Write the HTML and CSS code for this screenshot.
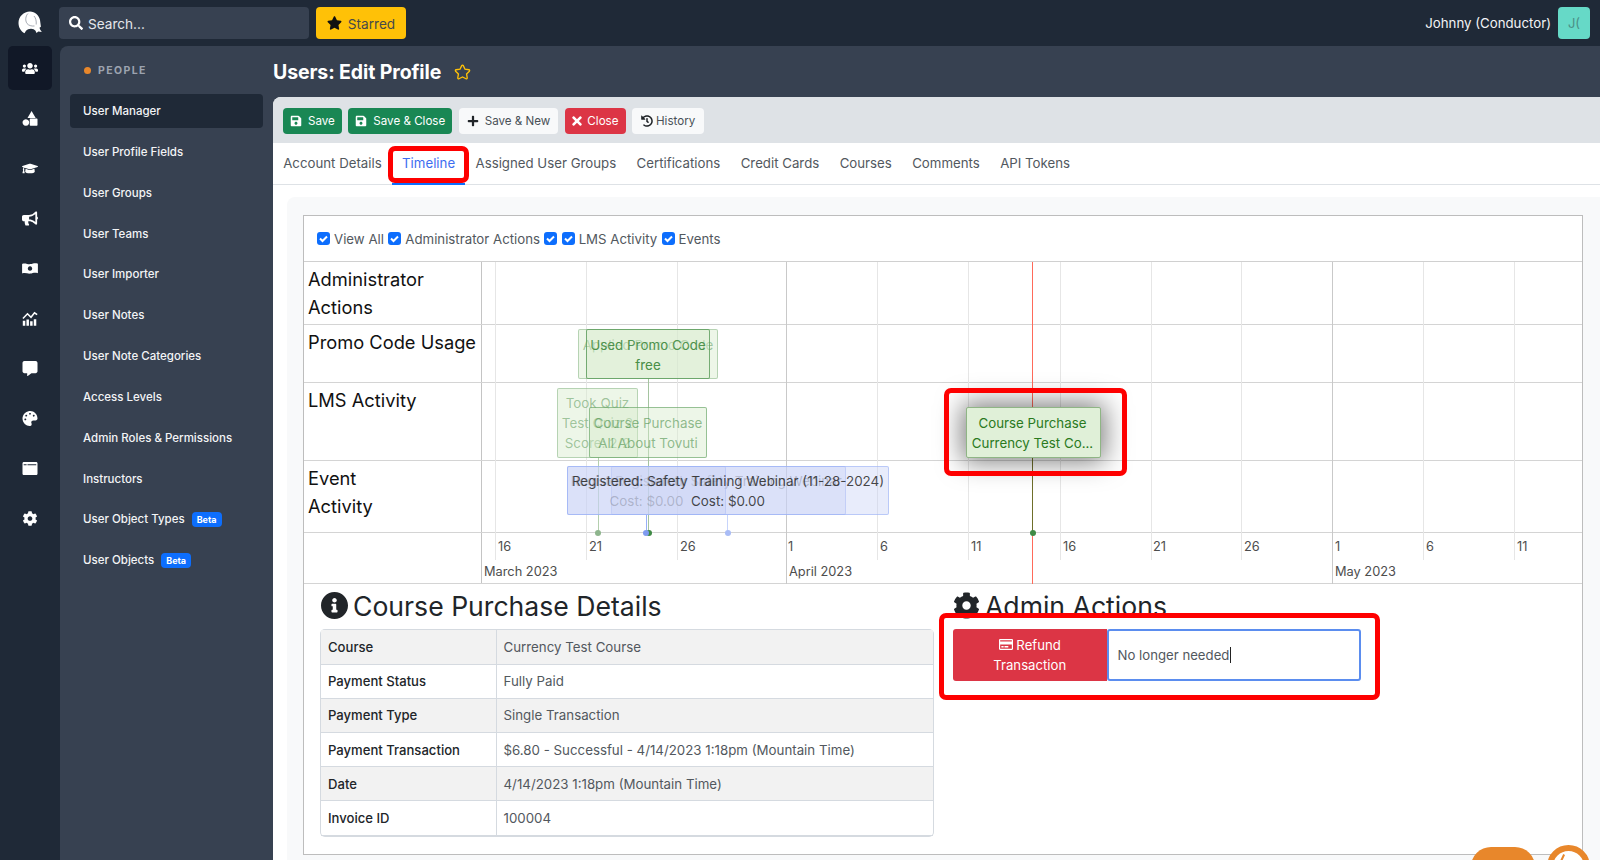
FILE: index.html
```html
<!DOCTYPE html>
<html lang="en">
<head>
<meta charset="utf-8">
<title>Users: Edit Profile</title>
<link rel="stylesheet" href="styles.css">
</head>
<body>
<header class="topbar">
  <div class="logo">
    <svg viewBox="0 0 26 26" width="26" height="26"><path fill="#fff" d="M12 .5C5.600 .5.500 5.700.500 12c0 4.400 2.400 8.300 6 10.300l1.500-2.500c1-1.300 3-2 5-2s3.500.7 4.500 2l1 2.200 1.800-1.600 3.500.6-1.700-2.400-.6-1.800 1.400-1-.9-6.800C21 4.500 17 .5 12 .5z"/><path fill="none" stroke="#6b7280" stroke-width=".6" d="M10 2.500C7.500 5 7 9.500 9 12.500c1.500 2 4.500 2.800 7.500 2.500M16 5c1.800 2 2.500 5 2.200 8.500"/></svg>
  </div>
  <div class="search">
    <svg class="search-icon" viewBox="0 0 512 512"><path d="M505 442.700L405.300 343c-4.500-4.500-10.600-7-17-7H372c27.600-35.300 44-79.700 44-128C416 93.100 322.900 0 208 0S0 93.100 0 208s93.100 208 208 208c48.300 0 92.700-16.400 128-44v16.300c0 6.400 2.500 12.500 7 17l99.700 99.700c9.400 9.400 24.600 9.400 33.900 0l28.300-28.300c9.400-9.400 9.400-24.600.1-34zM208 336c-70.700 0-128-57.200-128-128 0-70.700 57.200-128 128-128 70.700 0 128 57.200 128 128 0 70.700-57.200 128-128 128z"/></svg>
    <span class="top-text">Search...</span>
  </div>
  <button class="starred">
    <svg viewBox="0 0 576 512"><path d="M259.300 17.800L194 150.200 47.900 171.500c-26.200 3.800-36.700 36.100-17.700 54.600l105.700 103-25 145.500c-4.500 26.300 23.200 46 46.400 33.700L288 439.600l130.700 68.700c23.200 12.200 50.900-7.400 46.400-33.700l-25-145.500 105.700-103c19-18.500 8.500-50.800-17.700-54.600L382 150.200 316.700 17.800c-11.700-23.600-45.600-23.900-57.400 0z"/></svg>
    <span class="top-text">Starred</span>
  </button>
  <div class="user">
    <span class="user-name">Johnny (Conductor)</span>
    <span class="avatar">J(</span>
  </div>
</header>

<div class="shell">
  <nav class="rail">
    <a class="rail-item active"><svg viewBox="0 0 640 512"><path d="M96 224c35.300 0 64-28.700 64-64s-28.700-64-64-64-64 28.700-64 64 28.700 64 64 64zm448 0c35.300 0 64-28.700 64-64s-28.700-64-64-64-64 28.700-64 64 28.700 64 64 64zm32 32h-64c-17.600 0-33.500 7.100-45.100 18.600 40.300 22.100 68.900 62 75.100 109.400h66c17.700 0 32-14.300 32-32v-32c0-35.300-28.700-64-64-64zm-256 0c61.900 0 112-50.100 112-112S381.900 32 320 32 208 82.100 208 144s50.100 112 112 112zm76.800 32h-8.300c-20.800 10-43.900 16-68.500 16s-47.600-6-68.500-16h-8.300C179.600 288 128 339.600 128 403.200V432c0 26.500 21.500 48 48 48h288c26.500 0 48-21.500 48-48v-28.800c0-63.600-51.600-115.200-115.200-115.200zm-223.700-13.400C161.500 263.100 145.600 256 128 256H64c-35.300 0-64 28.700-64 64v32c0 17.700 14.300 32 32 32h65.900c6.300-47.400 34.900-87.300 75.200-109.400z"/></svg></a>
    <a class="rail-item"><svg viewBox="0 0 512 512"><path d="M310 0L170 235h280zM270 260h220c12 0 22 10 22 22v200c0 12-10 22-22 22H270c-12 0-22-10-22-22V282c0-12 10-22 22-22zM115 280a112 112 0 1 0 .1 0z"/></svg></a>
    <a class="rail-item"><svg viewBox="0 0 640 512"><path d="M622.340 153.200L343.400 67.500c-15.200-4.670-31.600-4.670-46.790 0L17.660 153.200c-23.540 7.230-23.540 38.360 0 45.590l48.630 14.940c-10.670 13.190-17.230 29.280-17.880 46.900C38.780 266.150 32 276.110 32 288c0 10.780 5.680 19.850 13.860 25.650L20.330 428.530C18.110 438.520 25.710 448 35.940 448h56.110c10.240 0 17.840-9.480 15.620-19.470L82.140 313.650C90.320 307.850 96 298.780 96 288c0-11.570-6.470-21.250-15.660-26.870.76-15.020 8.440-28.300 20.690-36.720L296.600 284.500c9.060 2.780 26.440 6.250 46.790 0l278.950-85.700c23.550-7.240 23.550-38.360 0-45.600zM352.790 315.090c-28.530 8.760-52.840 3.920-65.590 0l-145.020-44.550L128 384c0 35.350 85.960 64 192 64s192-28.650 192-64l-14.180-113.470-145.030 44.560z"/></svg></a>
    <a class="rail-item"><svg viewBox="0 0 576 512"><path d="M576 240c0-23.630-12.950-44.040-32-55.120V32.010C544 23.260 537.020 0 512 0c-7.120 0-14.190 2.380-19.980 7.020l-85.030 68.030C364.280 109.190 310.660 128 256 128H64c-35.350 0-64 28.650-64 64v96c0 35.350 28.650 64 64 64h33.700c-1.390 10.480-2.180 21.140-2.180 32 0 39.770 9.260 77.350 25.560 110.940 5.190 10.690 16.520 17.060 28.400 17.060h74.280c26.050 0 41.690-29.840 25.900-50.560-16.400-21.520-26.150-48.360-26.150-77.440 0-11.110 1.620-21.790 4.410-32H256c54.660 0 108.280 18.810 150.980 52.950l85.030 68.030a32.023 32.023 0 0 0 19.980 7.020c24.920 0 32-22.780 32-32V295.130C563.050 284.040 576 263.630 576 240zm-96 141.420l-33.050-26.440C392.950 311.780 325.120 288 256 288v-96c69.120 0 136.950-23.780 190.950-66.980L480 98.580v282.840z"/></svg></a>
    <a class="rail-item"><svg viewBox="0 0 640 512"><path fill-rule="evenodd" d="M20 70c100-50 220 30 320 10S520 20 620 60c10 4 16 12 16 22v340c0 16-14 24-30 18-100-40-180 10-280 20S120 410 30 450C14 456 4 446 4 430V92c0-10 6-18 16-22zM320 170a88 88 0 1 0 .1 0z"/></svg></a>
    <a class="rail-item"><svg viewBox="0 0 512 512"><path d="M10 330h85v170H10zM135 290h85v210h-85zM260 350h85v150h-85zM385 280h85v220h-85z"/><path fill="none" stroke="#fff" stroke-width="52" d="M15 255L170 95 290 215 410 60l90 65"/></svg></a>
    <a class="rail-item"><svg viewBox="0 0 512 512"><path d="M448 0H64C28.700 0 0 28.700 0 64v288c0 35.300 28.700 64 64 64h96v84c0 9.800 11.200 15.500 19.100 9.700L304 416h144c35.300 0 64-28.700 64-64V64c0-35.300-28.700-64-64-64z"/></svg></a>
    <a class="rail-item"><svg viewBox="0 0 512 512"><path d="M204.300 5C104.900 24.400 24.800 104.300 5.200 203.400c-37 187 131.700 326.400 258.800 306.700 41.200-6.400 61.400-54.600 42.500-91.700-23.100-45.400 9.900-98.400 60.900-98.400h79.700c35.800 0 64.800-29.600 64.900-65.300C511.500 97.100 368.100-26.900 204.300 5zM96 320c-17.700 0-32-14.300-32-32s14.300-32 32-32 32 14.300 32 32-14.300 32-32 32zm32-128c-17.700 0-32-14.300-32-32s14.300-32 32-32 32 14.300 32 32-14.300 32-32 32zm128-64c-17.700 0-32-14.300-32-32s14.300-32 32-32 32 14.300 32 32-14.300 32-32 32zm128 64c-17.700 0-32-14.300-32-32s14.300-32 32-32 32 14.300 32 32-14.300 32-32 32z"/></svg></a>
    <a class="rail-item"><svg viewBox="0 0 512 512"><path fill-rule="evenodd" d="M48 32h416c26.500 0 48 21.500 48 48v352c0 26.500-21.500 48-48 48H48c-26.500 0-48-21.500-48-48V80c0-26.500 21.500-48 48-48zM40 110v36h100v-36zM170 110v36h300v-36z"/></svg></a>
    <a class="rail-item"><svg viewBox="0 0 512 512"><path d="M487.400 315.700l-42.600-24.600c4.300-23.200 4.300-47 0-70.200l42.600-24.600c4.900-2.800 7.100-8.600 5.500-14-11.100-35.600-30-67.800-54.700-94.600-3.800-4.100-10-5.100-14.800-2.300L380.800 110c-17.900-15.400-38.500-27.300-60.800-35.100V25.800c0-5.600-3.900-10.500-9.400-11.700-36.700-8.200-74.300-7.800-109.200 0-5.500 1.200-9.400 6.100-9.400 11.700V75c-22.200 7.900-42.800 19.800-60.800 35.100L88.700 85.500c-4.900-2.800-11-1.900-14.800 2.300-24.700 26.700-43.600 58.900-54.700 94.600-1.700 5.400.6 11.200 5.500 14L67.300 221c-4.300 23.200-4.300 47 0 70.200l-42.600 24.600c-4.900 2.800-7.100 8.600-5.500 14 11.100 35.600 30 67.800 54.700 94.600 3.800 4.100 10 5.100 14.800 2.300l42.600-24.600c17.900 15.400 38.500 27.300 60.800 35.100v49.200c0 5.600 3.900 10.500 9.400 11.700 36.700 8.200 74.300 7.800 109.200 0 5.500-1.200 9.400-6.100 9.400-11.700v-49.200c22.200-7.900 42.800-19.800 60.800-35.100l42.600 24.600c4.900 2.800 11 1.900 14.800-2.300 24.700-26.700 43.600-58.900 54.700-94.600 1.500-5.500-.7-11.300-5.600-14.100zM256 336c-44.100 0-80-35.900-80-80s35.900-80 80-80 80 35.900 80 80-35.900 80-80 80z"/></svg></a>
  </nav>

  <div class="panel">
    <aside class="sidebar">
      <div class="side-title"><i class="dot"></i>PEOPLE</div>
      <ul class="side-list">
        <li class="side-item current">User Manager</li>
        <li class="side-item">User Profile Fields</li>
        <li class="side-item">User Groups</li>
        <li class="side-item">User Teams</li>
        <li class="side-item">User Importer</li>
        <li class="side-item">User Notes</li>
        <li class="side-item">User Note Categories</li>
        <li class="side-item">Access Levels</li>
        <li class="side-item">Admin Roles &amp; Permissions</li>
        <li class="side-item">Instructors</li>
        <li class="side-item">User Object Types <span class="beta">Beta</span></li>
        <li class="side-item">User Objects <span class="beta">Beta</span></li>
      </ul>
    </aside>

    <main class="main">
      <div class="page-head">
        <h1>Users: Edit Profile</h1>
        <svg class="title-star" viewBox="-30 -30 636 572"><path d="M259.300 17.800L194 150.200 47.900 171.500c-26.200 3.800-36.700 36.100-17.700 54.600l105.700 103-25 145.500c-4.500 26.300 23.200 46 46.400 33.700L288 439.600l130.700 68.700c23.200 12.200 50.900-7.400 46.400-33.700l-25-145.500 105.700-103c19-18.500 8.500-50.800-17.700-54.600L382 150.200 316.700 17.800c-11.700-23.600-45.600-23.900-57.400 0z"/></svg>
      </div>

      <div class="sheet">
        <div class="toolbar">
          <button class="btn green"><svg viewBox="0 0 448 512"><path d="M433.941 129.941l-83.882-83.882A48 48 0 0 0 316.118 32H48C21.490 32 0 53.490 0 80v352c0 26.510 21.490 48 48 48h352c26.510 0 48-21.490 48-48V163.882a48 48 0 0 0-14.059-33.941zM224 416c-35.346 0-64-28.654-64-64 0-35.346 28.654-64 64-64s64 28.654 64 64c0 35.346-28.654 64-64 64zm96-304.520V212c0 6.627-5.373 12-12 12H76c-6.627 0-12-5.373-12-12V108c0-6.627 5.373-12 12-12h228.520c3.183 0 6.235 1.264 8.485 3.515l3.480 3.480A11.996 11.996 0 0 1 320 111.480z"/></svg>Save</button>
          <button class="btn green"><svg viewBox="0 0 448 512"><path d="M433.941 129.941l-83.882-83.882A48 48 0 0 0 316.118 32H48C21.490 32 0 53.490 0 80v352c0 26.510 21.490 48 48 48h352c26.510 0 48-21.490 48-48V163.882a48 48 0 0 0-14.059-33.941zM224 416c-35.346 0-64-28.654-64-64 0-35.346 28.654-64 64-64s64 28.654 64 64c0 35.346-28.654 64-64 64zm96-304.520V212c0 6.627-5.373 12-12 12H76c-6.627 0-12-5.373-12-12V108c0-6.627 5.373-12 12-12h228.520c3.183 0 6.235 1.264 8.485 3.515l3.480 3.480A11.996 11.996 0 0 1 320 111.480z"/></svg>Save &amp; Close</button>
          <button class="btn light"><svg class="icon-dark" viewBox="0 0 448 512"><path d="M416 208H272V64c0-17.670-14.330-32-32-32h-32c-17.670 0-32 14.330-32 32v144H32c-17.670 0-32 14.330-32 32v32c0 17.670 14.330 32 32 32h144v144c0 17.670 14.330 32 32 32h32c17.670 0 32-14.330 32-32V304h144c17.670 0 32-14.330 32-32v-32c0-17.670-14.330-32-32-32z"/></svg>Save &amp; New</button>
          <button class="btn red"><svg viewBox="0 0 352 512"><path d="M242.720 256l100.070-100.070c12.280-12.280 12.280-32.190 0-44.480l-22.240-22.240c-12.280-12.280-32.190-12.280-44.480 0L176 189.280 75.930 89.210c-12.280-12.280-32.190-12.280-44.480 0L9.210 111.450c-12.280 12.280-12.280 32.190 0 44.480L109.280 256 9.210 356.070c-12.280 12.280-12.280 32.190 0 44.480l22.240 22.240c12.280 12.280 32.200 12.280 44.480 0L176 322.720l100.070 100.070c12.280 12.280 32.200 12.280 44.480 0l22.240-22.240c12.280-12.280 12.280-32.190 0-44.480L242.720 256z"/></svg>Close</button>
          <button class="btn light history"><svg class="icon-dark" viewBox="0 0 512 512"><path d="M504 255.531c.253 136.640-111.180 248.372-247.820 248.468-59.015.042-113.223-20.530-155.822-54.911-11.077-8.940-11.905-25.541-1.839-35.607l11.267-11.267c8.609-8.609 22.353-9.551 31.891-1.984C173.062 425.135 212.781 440 256 440c101.705 0 184-82.311 184-184 0-101.705-82.311-184-184-184-48.814 0-93.149 18.969-126.068 49.932l50.754 50.754c10.080 10.080 2.941 27.314-11.313 27.314H24c-8.837 0-16-7.163-16-16V38.627c0-14.254 17.234-21.393 27.314-11.314l49.372 49.372C129.209 34.136 189.552 8 256 8c136.810 0 247.747 110.780 248 247.531zm-180.912 78.784l9.823-12.630c8.138-10.463 6.253-25.542-4.210-33.679L288 256.349V152c0-13.255-10.745-24-24-24h-16c-13.255 0-24 10.745-24 24v135.651l65.409 50.874c10.463 8.137 25.541 6.253 33.679-4.210z"/></svg>History</button>
        </div>

        <div class="tabs">
          <a class="tab">Account Details</a>
          <a class="tab active">Timeline<span class="mark mark-tab"></span></a>
          <a class="tab">Assigned User Groups</a>
          <a class="tab">Certifications</a>
          <a class="tab">Credit Cards</a>
          <a class="tab">Courses</a>
          <a class="tab">Comments</a>
          <a class="tab">API Tokens</a>
        </div>

        <div class="body">
          <div class="card">
            <section class="box">
              <div class="filters">
                <label class="check"><input type="checkbox" checked>View All</label>
                <label class="check"><input type="checkbox" checked>Administrator Actions</label>
                <label class="check"><input type="checkbox" checked></label>
                <label class="check"><input type="checkbox" checked>LMS Activity</label>
                <label class="check"><input type="checkbox" checked>Events</label>
              </div>

              <div class="timeline">
                <div class="tl-row r1"><div class="tl-label">Administrator<br>Actions</div></div>
                <div class="tl-row r2"><div class="tl-label">Promo Code Usage</div></div>
                <div class="tl-row r3"><div class="tl-label">LMS Activity</div></div>
                <div class="tl-row r4"><div class="tl-label">Event<br>Activity</div></div>
                <div class="tl-row r5"><div class="tl-label"></div></div>

                <div class="canvas">
                  <i class="grid" style="left:13px"></i>
                  <i class="grid" style="left:104px"></i>
                  <i class="grid" style="left:195px"></i>
                  <i class="grid major" style="left:304px"></i>
                  <i class="grid" style="left:395px"></i>
                  <i class="grid" style="left:486px"></i>
                  <i class="grid" style="left:578px"></i>
                  <i class="grid" style="left:669px"></i>
                  <i class="grid" style="left:759px"></i>
                  <i class="grid major" style="left:850px"></i>
                  <i class="grid" style="left:941px"></i>
                  <i class="grid" style="left:1032px"></i>

                  <span class="day" style="left:16px">16</span>
                  <span class="day" style="left:107px">21</span>
                  <span class="day" style="left:198px">26</span>
                  <span class="day" style="left:306px">1</span>
                  <span class="day" style="left:398px">6</span>
                  <span class="day" style="left:489px">11</span>
                  <span class="day" style="left:581px">16</span>
                  <span class="day" style="left:671px">21</span>
                  <span class="day" style="left:762px">26</span>
                  <span class="day" style="left:853px">1</span>
                  <span class="day" style="left:944px">6</span>
                  <span class="day" style="left:1035px">11</span>
                  <span class="month" style="left:2px">March 2023</span>
                  <span class="month" style="left:307px">April 2023</span>
                  <span class="month" style="left:853px">May 2023</span>

                  <i class="now"></i>

                  <i class="stem s-quiz"></i>
                  <i class="stem s-promo"></i>
                  <i class="stem s-blue1"></i>
                  <i class="stem s-blue2"></i>
                  <i class="stem s-hi"></i>
                  <i class="pin p-quiz"></i>
                  <i class="pin p-promo"></i>
                  <i class="pin p-blue1"></i>
                  <i class="pin p-blue2"></i>
                  <i class="pin p-hi"></i>

                  <div class="item green-item promo-back">Applied Promo Code<br>free</div>
                  <div class="item green-item promo-front">Used Promo Code<br>free</div>
                  <div class="item green-item quiz">Took Quiz<br>Test Quiz 2<br>Score: 2/2</div>
                  <div class="item green-item course">Course Purchase<br>All About Tovuti</div>
                  <div class="item blue-item ev-a">Registered: Safety Training Webinar<br>&nbsp;</div>
                  <div class="item blue-item ev-b">Registered: Safety Train<br>Cost: $0.00</div>
                  <div class="item blue-item ev-c">Registered: Safety Training Webinar (11-28-2024)<br>Cost: $0.00</div>
                  <div class="item selected">Course Purchase<br>Currency Test Co...</div>
                  <span class="mark mark-item"></span>
                </div>
              </div>

              <div class="details">
                <div class="col-left">
                  <h2 class="heading"><svg viewBox="8 8 496 496"><path d="M256 8C119 8 8 119.100 8 256c0 137 111 248 248 248s248-111 248-248C504 119.100 393 8 256 8zm0 110c23.200 0 42 18.800 42 42s-18.800 42-42 42-42-18.800-42-42 18.800-42 42-42zm56 254c0 6.600-5.400 12-12 12h-88c-6.600 0-12-5.400-12-12v-24c0-6.600 5.400-12 12-12h12v-64h-12c-6.600 0-12-5.400-12-12v-24c0-6.600 5.400-12 12-12h64c6.600 0 12 5.400 12 12v100h12c6.600 0 12 5.400 12 12v24z"/></svg>Course Purchase Details</h2>
                  <table class="info">
                    <tr><th>Course</th><td>Currency Test Course</td></tr>
                    <tr><th>Payment Status</th><td>Fully Paid</td></tr>
                    <tr><th>Payment Type</th><td>Single Transaction</td></tr>
                    <tr><th>Payment Transaction</th><td>$6.80 - Successful - 4/14/2023 1:18pm (Mountain Time)</td></tr>
                    <tr><th>Date</th><td>4/14/2023 1:18pm (Mountain Time)</td></tr>
                    <tr><th>Invoice ID</th><td>100004</td></tr>
                  </table>
                </div>
                <div class="col-right">
                  <h2 class="heading admin-heading"><svg viewBox="0 0 512 512"><path d="M487.400 315.700l-42.600-24.600c4.300-23.200 4.300-47 0-70.200l42.600-24.600c4.900-2.800 7.100-8.600 5.500-14-11.100-35.600-30-67.800-54.700-94.600-3.800-4.100-10-5.100-14.800-2.300L380.800 110c-17.900-15.400-38.500-27.300-60.800-35.100V25.800c0-5.600-3.900-10.500-9.400-11.700-36.700-8.200-74.300-7.800-109.200 0-5.500 1.200-9.400 6.100-9.400 11.700V75c-22.200 7.900-42.800 19.800-60.800 35.100L88.700 85.500c-4.900-2.800-11-1.900-14.800 2.300-24.700 26.700-43.600 58.900-54.700 94.600-1.700 5.400.6 11.200 5.500 14L67.300 221c-4.300 23.200-4.300 47 0 70.200l-42.600 24.600c-4.900 2.800-7.100 8.600-5.500 14 11.100 35.600 30 67.800 54.700 94.600 3.800 4.100 10 5.100 14.800 2.300l42.600-24.600c17.900 15.400 38.500 27.300 60.800 35.100v49.200c0 5.600 3.900 10.500 9.400 11.700 36.700 8.200 74.300 7.800 109.200 0 5.500-1.200 9.400-6.100 9.400-11.700v-49.200c22.200-7.900 42.800-19.800 60.800-35.100l42.600 24.600c4.900 2.800 11 1.900 14.800-2.300 24.700-26.700 43.600-58.900 54.700-94.600 1.500-5.500-.7-11.300-5.600-14.100zM256 336c-44.100 0-80-35.900-80-80s35.900-80 80-80 80 35.900 80 80-35.900 80-80 80z"/></svg>Admin Actions</h2>
                  <div class="refund">
                    <button class="refund-btn"><svg viewBox="0 0 576 512"><path d="M527.900 32H48.100C21.500 32 0 53.500 0 80v352c0 26.500 21.500 48 48.100 48h479.800c26.600 0 48.100-21.500 48.100-48V80c0-26.500-21.500-48-48.100-48zM54.100 80h467.800c3.300 0 6 2.700 6 6v42H48.100V86c0-3.300 2.700-6 6-6zm467.800 352H54.100c-3.300 0-6-2.700-6-6V256h479.800v170c0 3.300-2.700 6-6 6zM192 332v40c0 6.600-5.400 12-12 12h-72c-6.600 0-12-5.400-12-12v-40c0-6.600 5.400-12 12-12h72c6.600 0 12 5.400 12 12zm192 0v40c0 6.600-5.400 12-12 12H236c-6.600 0-12-5.400-12-12v-40c0-6.600 5.400-12 12-12h136c6.600 0 12 5.400 12 12z"/></svg> Refund<br>Transaction</button>
                    <div class="refund-input">No longer needed<i class="caret"></i></div>
                  </div>
                  <span class="mark mark-admin"></span>
                </div>
              </div>
            </section>
          </div>
        </div>
      </div>
    </main>
  </div>
</div>

<div class="floaters">
  <span class="fab-pill"></span>
  <span class="fab-round"><i class="fab-tick"></i></span>
</div>
</body>
</html>
```
FILE: styles.css
```css
* { box-sizing: border-box; }
html, body { margin: 0; height: 860px; overflow: hidden; }
body {
  font-family: Inter, "Noto Sans", "Liberation Sans", sans-serif;
  background: #1f2937;
  color: #212529;
  font-size: 13.6px;
}
svg { fill: currentColor; display: block; }
h1, h2 { margin: 0; }
ul { list-style: none; margin: 0; padding: 0; }
button { font-family: inherit; border: 0; }

/* top bar */
.topbar { height: 46px; display: flex; align-items: center; padding-right: 10px; }
.logo { width: 59px; display: flex; justify-content: center; padding: 1px 0 0 3px; }
.search {
  width: 250px; height: 32px; background: #374151; border-radius: 4px;
  display: flex; align-items: center; gap: 5px; padding-left: 10px;
  color: #e5e7eb; font-size: 13.600px;
}
.search-icon { width: 14px; height: 14px; color: #fff; }
.top-text { padding-top: 1px; }
.starred {
  margin-left: 7px; width: 90px; height: 32px; background: #ffc107; border-radius: 4px;
  display: flex; align-items: center; justify-content: center; gap: 6px;
  color: #46494a; font-size: 13.600px;
}
.starred svg { width: 15px; height: 14px; color: #111; }
.user { margin-left: auto; display: flex; align-items: center; gap: 7px; }
.user-name { color: #f3f4f6; font-size: 13.250px; }
.avatar {
  width: 32px; height: 32px; border-radius: 4px; background: #66d9c7; color: #4b8f86;
  display: flex; align-items: center; justify-content: center; font-size: 13px;
}

/* shell */
.shell { display: flex; height: 814px; }
.rail { width: 60px; flex: none; padding: 0 8px; display: flex; flex-direction: column; gap: 6px; }
.rail-item { height: 44px; border-radius: 5px; color: #fff; display: flex; align-items: center; justify-content: center; }
.rail-item svg { width: 16px; height: 15px; }
.rail-item.active { background: #111827; }
.panel { flex: 1; min-width: 0; display: flex; background: #374151; border-top-left-radius: 8px; }

/* sidebar */
.sidebar { width: 213px; flex: none; padding: 0 10px; }
.side-title {
  height: 48px; display: flex; align-items: center; gap: 7px; padding-left: 14px;
  font-size: 10.500px; font-weight: 700; letter-spacing: 1.400px; color: #9ca3af;
}
.dot { width: 7px; height: 7px; border-radius: 50%; background: #e8872b; }
.side-list { display: flex; flex-direction: column; gap: 6.850px; }
.side-item {
  height: 34px; border-radius: 4px; padding-left: 13px; display: flex; align-items: center; gap: 7px;
  color: #f3f4f6; font-size: 11.500px; font-weight: 500;
}
.side-item.current { background: #1f2937; }
.beta { background: #0d6efd; color: #fff; font-size: 9px; font-weight: 700; padding: 2px 5px; border-radius: 4px; line-height: 11px; }

/* main */
.main { flex: 1; min-width: 0; display: flex; flex-direction: column; }
.page-head { height: 51px; display: flex; align-items: center; gap: 13px; }
.page-head h1 { color: #fff; font-size: 19.500px; font-weight: 700; line-height: 1; letter-spacing: -.1px; margin-top: 2px; }
.title-star { width: 17px; height: 16px; fill: none; stroke: #ffc107; stroke-width: 50px; }
.sheet { flex: 1; background: #fff; border-top-left-radius: 8px; display: flex; flex-direction: column; min-height: 0; overflow: hidden; }

.toolbar { height: 46px; flex: none; background: #dee2e6; display: flex; align-items: center; gap: 6.500px; padding: 1px 0 0 10px; }
.btn {
  height: 26px; border-radius: 4px; display: flex; align-items: center; gap: 6px; padding: 0 7px;
  font-size: 11.600px;
}
.btn svg { width: 12px; height: 12px; }
.btn.green { background: #198754; color: #fff; }
.btn.red { background: #dc3545; color: #fff; gap: 5px; padding: 0 7.500px; }
.btn.red svg { width: 10px; height: 14px; }
.btn.light { background: #f8f9fa; color: #495057; padding: 0 8px; }
.btn .icon-dark { color: #212529; }
.btn.light.history { gap: 3px; padding: 0 8.500px; }

.tabs { height: 42px; flex: none; display: flex; border-bottom: 1px solid #dee2e6; }
.tab { position: relative; padding: 0 10.200px 2px; display: flex; align-items: center; color: #52585e; font-size: 13.250px; height: 42px; }
.tab.active { color: #3d6df0; border-bottom: 2px solid #0d6efd; padding-bottom: 0; }

.mark { position: absolute; border: 5px solid #fe0000; border-radius: 7px; z-index: 5; pointer-events: none; }
.mark-tab { left: -4px; right: -4px; top: 3px; height: 37px; }

.body { flex: 1; min-height: 0; padding: 12px 0 0 14px; }
.card { height: 100%; background: #f8f9fa; border-top-left-radius: 8px; padding: 18px 17px 0 16px; }
.box { background: #fff; border: 1px solid #bdbdbd; position: relative; height: 640px; }

.filters { height: 46px; display: flex; align-items: center; gap: 4.300px; padding-left: 13px; border-bottom: 1px solid #d0d0d0; }
.check { display: flex; align-items: center; gap: 4px; color: #52585e; font-size: 13.250px; }
.check input {
  appearance: none; width: 13px; height: 13px; margin: 0; border-radius: 3px; background-color: #0d6efd;
  background-image: url("data:image/svg+xml,%3Csvg xmlns='http://www.w3.org/2000/svg' viewBox='0 0 13 13'%3E%3Cpath fill='none' stroke='%23fff' stroke-width='2' d='M3 6.500l2.500 2.500 4.500-4.500'/%3E%3C/svg%3E");
}

/* timeline */
.timeline { position: relative; }
.tl-row { display: flex; border-bottom: 1px solid #d4d4d4; }
.r1 { height: 63px; } .r2 { height: 58px; } .r3 { height: 78px; } .r4 { height: 72px; } .r5 { height: 51px; }
.tl-label { width: 178px; flex: none; padding: 4px 0 0 4px; border-right: 1px solid #c4c4c4; font-size: 18.300px; line-height: 27.500px; color: #111; white-space: nowrap; }
.canvas { position: absolute; left: 178px; top: 0; right: 0; bottom: 0; }
.grid { position: absolute; top: 0; height: 298px; width: 1px; background: #e6e6e6; }
.grid.major { height: 322px; background: #c9c9c9; }
.day { position: absolute; top: 277px; font-size: 12.800px; color: #4d4d4d; line-height: 16px; }
.month { position: absolute; top: 302px; font-size: 12.800px; color: #4d4d4d; line-height: 16px; }
.now { position: absolute; left: 550px; top: 0; bottom: 0; width: 1px; background: #ff6a5a; }

.stem { position: absolute; width: 1px; }
.s-quiz { left: 116px; top: 195px; height: 76px; background: #b4cfae; }
.s-promo { left: 166px; top: 116px; height: 155px; background: #a5c4a0; }
.s-blue1 { left: 164px; top: 253px; height: 18px; background: #97b0f8; }
.s-blue2 { left: 245px; top: 253px; height: 18px; background: #c7d4fb; }
.s-hi { left: 550px; top: 195px; height: 76px; background: #6f6f2a; }
.pin { position: absolute; top: 268px; width: 6px; height: 6px; border-radius: 50%; }
.p-quiz { left: 113px; background: #8eb58d; }
.p-promo { left: 164px; background: #3f8a45; }
.p-blue1 { left: 161px; background: #7f9bf0; }
.p-blue2 { left: 243px; background: #a9bcf6; }
.p-hi { left: 548px; background: #3f8a45; }

.item {
  position: absolute; text-align: center; font-size: 13.400px; line-height: 20px; white-space: nowrap;
  border-radius: 2px; border: 1px solid; padding-top: 4px;
}
.green-item { background: rgba(214, 235, 205, .45); border-color: rgba(100, 160, 100, .4); color: rgba(45, 125, 45, .42); }
.blue-item { background: rgba(200, 210, 245, .42); border-color: rgba(140, 165, 245, .45); }
.promo-back { left: 96px; top: 67px; width: 140px; height: 50px; padding-top: 5px; }
.promo-front { left: 104px; top: 67px; width: 124px; height: 50px; padding-top: 5px; border-color: rgba(80, 150, 80, .75); color: rgba(45, 125, 45, .8); }
.quiz { left: 75px; top: 126px; width: 81px; height: 70px; }
.course { left: 107px; top: 145px; width: 118px; height: 51px; padding-top: 5px; border-color: rgba(80, 150, 80, .55); color: rgba(45, 125, 45, .5); }
.ev-a { left: 129px; top: 204px; width: 235px; height: 49px; color: rgba(60, 60, 60, .4); }
.ev-b { left: 85px; top: 204px; width: 159px; height: 49px; color: rgba(60, 60, 60, .42); }
.ev-c { left: 85px; top: 204px; width: 322px; height: 49px; color: rgba(40, 40, 40, .85); border-color: rgba(140, 165, 245, .5); }
.selected {
  left: 484px; top: 145px; width: 135px; height: 51px; padding: 5px 2px 0 0; font-size: 13.300px; background: #e0f0d8; border-color: #8fb585; color: #2a7a1e;
  box-shadow: 0 0 26px 4px rgba(0, 0, 0, .5); z-index: 2;
}
.mark-item { left: 462px; top: 126px; width: 183px; height: 88px; }

/* details */
.details { display: flex; padding: 0 16px; position: relative; }
.col-left { width: 614px; flex: none; }
.col-right { position: relative; margin-left: 19px; width: 408px; }
.heading { display: flex; align-items: center; gap: 5px; height: 46px; font-size: 26.600px; font-weight: 400; color: #212529; white-space: nowrap; padding-bottom: 3px; }
.heading svg { width: 27px; height: 27px; flex: none; margin: -1px 0 0 1px; }
.admin-heading svg { margin-left: 0; }
.info { width: 612px; margin: 0 0 0 1px; border-collapse: collapse; font-size: 13.300px; border-radius: 4px; box-shadow: 0 0 0 1px #d5dae0; }
.info tr { height: 34.200px; }
.info tr:nth-child(odd) { background: #f2f2f2; }
.info th { width: 175px; text-align: left; font-size: 13.100px; font-weight: 500; padding: 0 7px; border-right: 1px solid #d5dae0; border-bottom: 1px solid #d5dae0; color: #212529; }
.info td { padding: 0 7px; border-bottom: 1px solid #d5dae0; color: #52585e; }
.refund { display: flex; height: 52px; margin-top: -1px; }
.refund-btn { width: 153.500px; background: #dc3545; color: #fff; font-size: 13.200px; line-height: 20px; border-radius: 3px 0 0 3px; text-align: center; }
.refund-btn svg { display: inline-block; width: 14px; height: 13px; vertical-align: -1px; }
.refund-input { flex: 1; border: 2px solid #5b8def; border-radius: 3px; background: #fff; display: flex; align-items: center; padding-left: 9px; font-size: 13.200px; color: #52585e; }
.caret { display: inline-block; width: 1px; height: 16px; background: #222; margin-left: 1px; }
.mark-admin { left: -14px; top: 29px; width: 441px; height: 87px; }

/* floating */
.floaters { position: fixed; left: 1471px; top: 845px; display: flex; gap: 12px; align-items: flex-start; }
.fab-pill { width: 64px; height: 40px; margin-top: 2px; background: #e8872b; border-radius: 20px 20px 0 0; }
.fab-round { width: 43px; height: 43px; border: 6px solid #e8872b; border-radius: 50%; background: #fff; position: relative; }
.fab-tick { position: absolute; left: 8px; top: 3px; width: 2px; height: 10px; background: #e8872b; transform: rotate(25deg); }
```
